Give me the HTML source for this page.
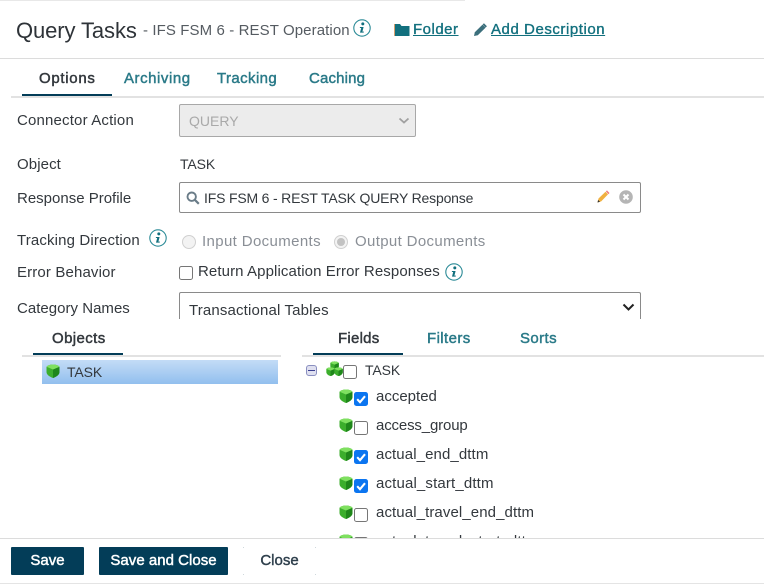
<!DOCTYPE html>
<html><head><meta charset="utf-8"><style>
html,body{margin:0;padding:0;background:#fff}
body{width:764px;height:585px;position:relative;overflow:hidden;font-family:"Liberation Sans",sans-serif;color:#33383d;font-size:15px}
.t{position:absolute;white-space:nowrap;line-height:18px;height:18px;letter-spacing:.1px}
.b{position:absolute}
.tab{color:#2a7a88;font-size:15px;-webkit-text-stroke:.45px currentColor}
.cur{color:#33383d}
.g{color:#8a8f96}
.cb{position:absolute;width:12px;height:12px;border:1px solid #767676;border-radius:2.5px;background:#fff}
.on{position:absolute;width:14px;height:14px;border-radius:2.5px;background:#0b75f0}
.on svg{display:block}
.cube{position:absolute}
.dot{position:absolute;width:1px;height:1px;background:#cfd8dc}
</style></head><body>
<svg width="0" height="0" style="position:absolute"><defs>
<g id="cube"><path d="M7 .5 C9 .5 12 1 13.5 2.8 V8 C13.5 11 9.5 13.2 7 14 C4.5 13.2 .5 11 .5 8 V2.8 C2 1 5 .5 7 .5Z" fill="#3cae2c"/><path d="M7 5.5 L13.5 2.8 V8 C13.5 11 9.5 13.2 7 14Z" fill="#1f871a"/><path d="M7 .5 C9 .5 12 1 13.5 2.8 L7 5.5 L.5 2.8 C2 1 5 .5 7 .5Z" fill="#7fe060"/></g>
<g id="info"><circle cx="9" cy="9" r="8.2" fill="#fff" stroke="#2a8a96" stroke-width="1.1"/><circle cx="9.8" cy="4.9" r="1.5" fill="#12707e"/><path d="M7 8 H10.6 L9.4 12.6 H11 L10.6 13.6 H7 L8.2 9 H6.8Z" fill="#12707e"/></g>
<g id="chk"><path d="M3.2 7.2 L6 10.2 L11 4.2" fill="none" stroke="#fff" stroke-width="2.1"/></g>
</defs></svg>

<div class="b" style="left:0;top:0;width:465px;height:1px;background:#e8e8e8"></div>
<div class="t" style="left:16px;top:18px;height:26px;line-height:26px;font-size:22px;color:#2e3338;letter-spacing:-.1px">Query Tasks</div>
<div class="t" style="left:143px;top:21px;height:20px;line-height:20px;font-size:15px;color:#555b61;letter-spacing:.1px">- IFS FSM 6 - REST Operation</div>
<svg class="b" style="left:353px;top:19px" width="18" height="18"><use href="#info"/></svg>

<svg class="b" style="left:394px;top:23px" width="16" height="13"><path d="M.5 1 H6 L7.5 3 H15.5 V13 H.5Z" fill="#12707e"/><path d="M.5 1V13" stroke="#d8a070" stroke-width="1"/></svg>
<div class="t" style="left:413px;top:21px;height:20px;line-height:18px;font-size:15px;-webkit-text-stroke:.35px #12707e;color:#12707e;letter-spacing:.5px;text-decoration:underline">Folder</div>
<svg class="b" style="left:473px;top:23px" width="14" height="14"><path d="M1 13 L1.8 9.2 L9.5 1.6 L12.6 4.6 L4.8 12.3Z" fill="#3c6f7c"/><path d="M10.3 .9 L13.3 3.9" stroke="#3c6f7c" stroke-width="1.8"/></svg>
<div class="t" style="left:491px;top:21px;height:20px;line-height:18px;font-size:15px;-webkit-text-stroke:.35px #12707e;color:#12707e;letter-spacing:.55px;text-decoration:underline">Add Description</div>

<div class="b" style="left:0;top:58px;width:764px;height:1px;background:#dcdcdc"></div>

<div class="t tab cur" style="left:39px;top:70px;letter-spacing:.7px">Options</div>
<div class="t tab" style="left:124px;top:70px;letter-spacing:.55px">Archiving</div>
<div class="t tab" style="left:217px;top:70px;letter-spacing:.4px">Tracking</div>
<div class="t tab" style="left:309px;top:70px;letter-spacing:.15px">Caching</div>
<div class="b" style="left:11px;top:96px;width:753px;height:2px;background:#e2e2e2"></div>
<div class="b" style="left:22px;top:94px;width:90px;height:2px;background:#033d58"></div>

<div class="t" style="left:17px;top:112px;letter-spacing:.17px">Connector Action</div>
<div class="b" style="left:179px;top:104px;width:235px;height:31px;background:#ececec;border:1px solid #a8a8a8;border-radius:2px"></div>
<div class="t" style="left:189px;top:112px;font-size:14px;color:#a9a9a9;letter-spacing:0">QUERY</div>
<svg class="b" style="left:398px;top:117px" width="12" height="8"><path d="M1.5 1.5 L6 5.5 L10.5 1.5" fill="none" stroke="#a0a0a0" stroke-width="1.8"/></svg>

<div class="t" style="left:17px;top:156px">Object</div>
<div class="t" style="left:180px;top:155px;font-size:14px;letter-spacing:-.1px">TASK</div>

<div class="t" style="left:17px;top:190px;letter-spacing:0">Response Profile</div>
<div class="b" style="left:179px;top:182px;width:460px;height:29px;background:#fff;border:1px solid #8a8a8a;border-radius:2px"></div>
<svg class="b" style="left:186px;top:191px" width="14" height="14"><circle cx="5.7" cy="5.7" r="4.2" fill="none" stroke="#6a7c88" stroke-width="1.9"/><path d="M8.8 8.8 L12.8 12.8" stroke="#6a7c88" stroke-width="2.2"/></svg>
<div class="t" style="left:204px;top:189px;font-size:14px;letter-spacing:-.18px">IFS FSM 6 - REST TASK QUERY Response</div>
<svg class="b" style="left:597px;top:190px" width="13" height="13"><path d="M.5 12.5 L1.5 8.5 L8.5 1.8 L11 4.4 L4.2 11.4Z" fill="#f0b040"/><path d="M8.8 1.4 L10 .4 L12.5 3 L11.4 4.2Z" fill="#f08080"/><path d="M.5 12.5 L1.1 10 L3 11.8Z" fill="#333"/></svg>
<svg class="b" style="left:619px;top:190px" width="14" height="14"><circle cx="7" cy="7" r="6.8" fill="#b5b5b5"/><path d="M4.5 4.5 L9.5 9.5 M9.5 4.5 L4.5 9.5" stroke="#fff" stroke-width="2"/></svg>

<div class="t" style="left:17px;top:232px;letter-spacing:.14px">Tracking Direction</div>
<svg class="b" style="left:149px;top:229px" width="18" height="18"><use href="#info"/></svg>
<div class="b" style="left:182px;top:235px;width:12px;height:12px;border:1px solid #d0d0d0;border-radius:50%;background:#f3f3f3"></div>
<div class="t g" style="left:202px;top:233px;letter-spacing:.37px">Input Documents</div>
<div class="b" style="left:334px;top:235px;width:12px;height:12px;border:1px solid #d0d0d0;border-radius:50%;background:#f3f3f3"></div>
<div class="b" style="left:337px;top:238px;width:8px;height:8px;border-radius:50%;background:#c2c2c2"></div>
<div class="t g" style="left:355px;top:233px;letter-spacing:.35px">Output Documents</div>

<div class="t" style="left:17px;top:264px;letter-spacing:.14px">Error Behavior</div>
<div class="cb" style="left:179px;top:266px"></div>
<div class="t" style="left:198px;top:263px;letter-spacing:.1px">Return Application Error Responses</div>
<svg class="b" style="left:445px;top:263px" width="18" height="18"><use href="#info"/></svg>

<div class="t" style="left:17px;top:300px;letter-spacing:.02px">Category Names</div>
<div class="b" style="left:179px;top:292px;width:460px;height:26px;background:#fff;border:1px solid #8a8a8a;border-bottom:none;border-radius:2px 2px 0 0"></div>
<div class="t" style="left:189px;top:302px;letter-spacing:.15px">Transactional Tables</div>
<svg class="b" style="left:622px;top:303px" width="13" height="9"><path d="M1.5 1.5 L6.5 6.5 L11.5 1.5" fill="none" stroke="#222" stroke-width="2"/></svg>

<div class="t tab cur" style="left:52px;top:330px;letter-spacing:.4px">Objects</div>
<div class="b" style="left:22px;top:355px;width:259px;height:2px;background:#e2e2e2"></div>
<div class="b" style="left:33px;top:353px;width:90px;height:2px;background:#033d58"></div>
<div class="b" style="left:42px;top:360px;width:236px;height:24px;background:linear-gradient(#c3dcf6,#92bfee)"></div>
<svg class="cube" style="left:46px;top:364px" width="14" height="14"><use href="#cube"/></svg>
<div class="t" style="left:67px;top:363px;font-size:14px;letter-spacing:-.1px">TASK</div>

<div class="t tab cur" style="left:338px;top:330px;letter-spacing:.25px">Fields</div>
<div class="t tab" style="left:427px;top:330px;letter-spacing:.4px">Filters</div>
<div class="t tab" style="left:520px;top:330px;letter-spacing:.4px">Sorts</div>
<div class="b" style="left:302px;top:355px;width:462px;height:2px;background:#e2e2e2"></div>
<div class="b" style="left:313px;top:353px;width:90px;height:2px;background:#033d58"></div>

<div class="b" style="left:306px;top:365px;width:9px;height:9px;border:1px solid #8a8fc0;border-radius:3px;background:#dfe0f0"></div>
<div class="b" style="left:308px;top:369.5px;width:7px;height:1.5px;background:#3a3f8f"></div>
<svg class="b" style="left:326px;top:361px" width="17" height="15"><g transform="translate(4,0) scale(.65)"><use href="#cube"/></g><g transform="translate(0,6) scale(.65)"><use href="#cube"/></g><g transform="translate(8,6) scale(.65)"><use href="#cube"/></g></svg>
<div class="cb" style="left:343px;top:365px"></div>
<div class="t" style="left:365px;top:361px;font-size:14px;letter-spacing:-.1px">TASK</div>

<svg class="cube" style="left:339px;top:389px" width="14" height="14"><use href="#cube"/></svg>
<div class="on" style="left:354px;top:392px"><svg width="14" height="14"><use href="#chk"/></svg></div>
<div class="t" style="left:376px;top:388px;letter-spacing:0">accepted</div>

<svg class="cube" style="left:339px;top:418px" width="14" height="14"><use href="#cube"/></svg>
<div class="cb" style="left:354px;top:421px"></div>
<div class="t" style="left:376px;top:417px;letter-spacing:-.15px">access_group</div>

<svg class="cube" style="left:339px;top:447px" width="14" height="14"><use href="#cube"/></svg>
<div class="on" style="left:354px;top:450px"><svg width="14" height="14"><use href="#chk"/></svg></div>
<div class="t" style="left:376px;top:446px;letter-spacing:.1px">actual_end_dttm</div>

<svg class="cube" style="left:339px;top:476px" width="14" height="14"><use href="#cube"/></svg>
<div class="on" style="left:354px;top:479px"><svg width="14" height="14"><use href="#chk"/></svg></div>
<div class="t" style="left:376px;top:475px;letter-spacing:.15px">actual_start_dttm</div>

<svg class="cube" style="left:339px;top:505px" width="14" height="14"><use href="#cube"/></svg>
<div class="cb" style="left:354px;top:508px"></div>
<div class="t" style="left:376px;top:504px;letter-spacing:.1px">actual_travel_end_dttm</div>

<svg class="cube" style="left:339px;top:534px" width="14" height="14"><use href="#cube"/></svg>
<div class="cb" style="left:354px;top:537px"></div>
<div class="t" style="left:376px;top:533px;letter-spacing:.1px">actual_travel_start_dttm</div>

<div class="b" style="left:0;top:538px;width:764px;height:47px;background:#fff;border-top:1px solid #dcdcdc;box-sizing:border-box"></div>
<div class="b" style="left:0;top:583px;width:764px;height:1px;background:#e4e4e4"></div>
<div class="b" style="left:11px;top:547px;width:73px;height:28px;background:#033d58;border-radius:1px"></div>
<div class="t" style="left:11px;width:73px;text-align:center;top:552px;color:#fff;-webkit-text-stroke:.45px #fff;letter-spacing:0">Save</div>
<div class="b" style="left:99px;top:547px;width:129px;height:28px;background:#033d58;border-radius:1px"></div>
<div class="t" style="left:99px;width:129px;text-align:center;top:552px;color:#fff;-webkit-text-stroke:.45px #fff;letter-spacing:.02px">Save and Close</div>
<div class="t" style="left:243px;width:73px;text-align:center;top:552px;color:#2e3f4c;-webkit-text-stroke:.4px #2e3f4c;letter-spacing:0">Close</div>
<div class="dot" style="left:243px;top:547px"></div><div class="dot" style="left:315px;top:547px"></div><div class="dot" style="left:243px;top:574px"></div><div class="dot" style="left:315px;top:574px"></div>
</body></html>
